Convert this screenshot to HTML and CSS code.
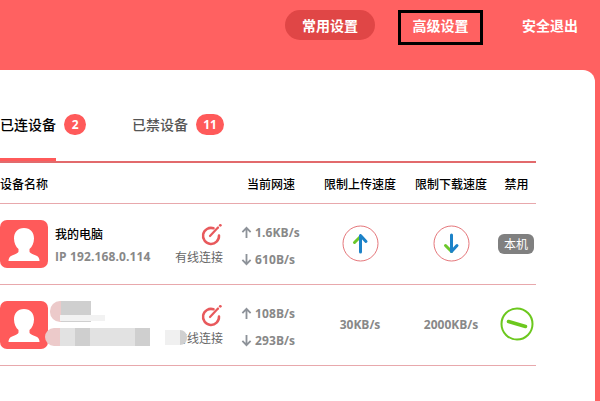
FILE: index.html
```html
<!DOCTYPE html>
<html lang="zh-CN">
<head>
    <meta charset="UTF-8">
    <meta name="viewport" content="width=device-width, initial-scale=1.0">
    <title>高级设置</title>
    <link rel="stylesheet" href="styles.css">
</head>
<body>
    <!-- Top navigation -->
    <div class="topbar">
        <a class="nav-item nav-active">常用设置</a>
        <a class="nav-item nav-focus">高级设置</a>
        <a class="nav-item nav-exit">安全退出</a>
    </div>

    <!-- Main white card -->
    <div class="card">
        <div class="tabs">
            <div class="tab tab-on">已连设备 <span class="badge">2</span></div>
            <div class="tab">已禁设备 <span class="badge">11</span></div>
        </div>

        <div class="row head">
            <div class="cell-name">设备名称</div>
            <div class="cell-speed">当前网速</div>
            <div class="cell-limit">限制上传速度</div>
            <div class="cell-limit">限制下载速度</div>
            <div class="cell-ban">禁用</div>
        </div>

        <!-- Device 1 -->
        <div class="row device">
            <div class="cell-name">
                <svg class="avatar" viewBox="0 0 48 48"><use href="#person"/></svg>
                <div class="info">
                    <div class="dev-name">我的电脑</div>
                    <div class="dev-ip">IP 192.168.0.114</div>
                </div>
                <div class="link">
                    <svg class="edit" viewBox="0 0 23 23"><use href="#pen"/></svg>
                    <div>有线连接</div>
                </div>
            </div>
            <div class="cell-speed rates">
                <div class="rate"><svg class="rate-arrow" viewBox="0 0 12 14"><path d="M6 13V2M1.500 6.500L6 2l4.500 4.500"/></svg>1.6KB/s</div>
                <div class="rate"><svg class="rate-arrow" viewBox="0 0 12 14"><path d="M6 1v11M1.500 7.500L6 12l4.500-4.500"/></svg>610B/s</div>
            </div>
            <div class="cell-limit">
                <svg class="limit-btn" viewBox="0 0 37 37">
                    <circle class="ring" cx="18.500" cy="18.500" r="17.500"/>
                    <path class="barb-green" d="M12.500 17.500l6-6"/>
                    <path class="barb-blue" d="M18.500 27V10.500M18.500 10.500l5.500 6"/>
                </svg>
            </div>
            <div class="cell-limit">
                <svg class="limit-btn" viewBox="0 0 37 37">
                    <circle class="ring" cx="18.500" cy="18.500" r="17.500"/>
                    <path class="barb-green" d="M12.500 20.500l6 6"/>
                    <path class="barb-blue" d="M18.500 10v16.500M18.500 26.500l5.500-6"/>
                </svg>
            </div>
            <div class="cell-ban"><span class="local">本机</span></div>
        </div>

        <!-- Device 2, name and address are blurred out -->
        <div class="row device">
            <div class="cell-name">
                <svg class="avatar" viewBox="0 0 48 48"><use href="#person"/></svg>
                <div class="link">
                    <svg class="edit" viewBox="0 0 23 23"><use href="#pen"/></svg>
                    <div>有线连接</div>
                </div>
                <div class="mosaic mosaic-name">
                    <i class="m-pink"></i><i class="m-grey"></i><i class="m-grey"></i>
                </div>
                <div class="mosaic mosaic-faint"></div>
                <div class="mosaic mosaic-ip">
                    <i class="m-pink"></i><i class="m-light"></i><i class="m-grey"></i><i class="m-light"></i><i class="m-light"></i><i class="m-light"></i><i class="m-grey"></i>
                </div>
                <div class="mosaic mosaic-tail">
                    <i class="m-pale"></i><i class="m-end"></i>
                </div>
            </div>
            <div class="cell-speed rates">
                <div class="rate"><svg class="rate-arrow" viewBox="0 0 12 14"><path d="M6 13V2M1.500 6.500L6 2l4.500 4.500"/></svg>108B/s</div>
                <div class="rate"><svg class="rate-arrow" viewBox="0 0 12 14"><path d="M6 1v11M1.500 7.500L6 12l4.500-4.500"/></svg>293B/s</div>
            </div>
            <div class="cell-limit limit-val">30KB/s</div>
            <div class="cell-limit limit-val">2000KB/s</div>
            <div class="cell-ban">
                <svg class="ban-btn" viewBox="0 0 34 34">
                    <circle cx="17" cy="17" r="15.500"/>
                    <path d="M8.500 14.500l17 5"/>
                </svg>
            </div>
        </div>
    </div>

    <!-- Shared icons -->
    <svg class="defs" aria-hidden="true">
        <symbol id="person" viewBox="0 0 48 48">
            <rect width="48" height="48" rx="7" fill="#ff5a5a"/>
            <path fill="#fff" d="M24 8c6.500 0 10 4.500 10 10.500 0 4.500-2 8.500-4.500 10.500v2.500c0 1.500 3 2.500 6.500 4 3 1.200 3.500 3.500 3.500 5.500H8.500c0-2 .5-4.300 3.500-5.500 3.500-1.500 6.500-2.500 6.500-4V29C16 27 14 23 14 18.500 14 12.500 17.500 8 24 8z"/>
        </symbol>
        <symbol id="pen" viewBox="0 0 23 23">
            <path fill="none" stroke="#e8595c" stroke-width="2.500" stroke-linecap="round" d="M14.500 5.300A8 8 0 1 0 20 12.500"/>
            <path fill="none" stroke="#e8595c" stroke-width="2.200" stroke-linecap="round" d="M11 13L19 4.500"/>
            <circle cx="21.300" cy="2.300" r="1.400" fill="#e8595c"/>
        </symbol>
    </svg>
</body>
</html>
```

FILE: styles.css
```css
/* General styling */

body {
    margin: 0;
    height: 401px;
    overflow: hidden;
    display: flex;
    flex-direction: column;
    background-color: #ff6161;
    font-family: "Noto Sans CJK SC", "Open Sans", sans-serif;
    font-size: 12px;
    color: #000;
}

.defs {
    display: none;
}

/* Top navigation */
.topbar {
    height: 70px;
    display: flex;
    align-items: flex-start;
    padding-top: 10px;
    padding-left: 285px;
    box-sizing: border-box;
}

.nav-item {
    font-size: 14px;
    font-weight: 700;
    color: #fff;
    line-height: 30px;
    text-align: center;
}

.nav-active {
    width: 90px;
    background-color: #e04646;
    border-radius: 15px;
}

.nav-focus {
    width: 79px;
    height: 29px;
    margin-left: 23px;
    border: 3px solid #000;
    line-height: 24px;
}

.nav-exit {
    margin-left: 39px;
}

/* White card */
.card {
    flex: 1;
    width: 595px;
    background-color: #fff;
    border-top-right-radius: 12px;
}

/* Tabs */
.tabs {
    width: 536px;
    height: 93px;
    box-sizing: border-box;
    display: flex;
    border-bottom: 2px solid #e26a6c;
}

.tab {
    width: 132px;
    height: 91px;
    box-sizing: border-box;
    padding-top: 42px;
    font-size: 14px;
    line-height: 24px;
    font-weight: 500;
    color: #555;
}

.tab-on {
    color: #000;
    position: relative;
}

.tab-on::after {
    content: "";
    position: absolute;
    left: 0;
    bottom: 0;
    width: 56px;
    height: 3px;
    background-color: #ff5a5a;
}

.badge {
    display: inline-block;
    min-width: 22px;
    height: 21px;
    box-sizing: border-box;
    margin-left: 5px;
    padding: 0 7px;
    border-radius: 11px;
    background-color: #ff5a5a;
    color: #fff;
    font-family: "Open Sans", sans-serif;
    font-size: 12px;
    font-weight: 700;
    line-height: 21px;
    text-align: center;
    vertical-align: 1px;
}

/* Table rows */
.row {
    width: 536px;
    display: grid;
    grid-template-columns: 240px 75px 90px 92px 39px;
    align-items: center;
    border-bottom: 1px solid #e8a8ac;
    box-sizing: border-box;
}

.head {
    height: 41px;
    font-weight: 500;
    white-space: nowrap;
}

.head .cell-speed {
    padding-left: 7px;
}

.head .cell-limit,
.head .cell-ban {
    text-align: center;
}

.device {
    height: 81px;
}

.cell-name {
    display: flex;
    align-items: center;
    position: relative;
}

.device .cell-name {
    height: 48px;
}

.avatar {
    width: 48px;
    height: 48px;
    flex: none;
}

.info {
    margin-left: 7px;
}

.dev-name {
    font-weight: 500;
    line-height: 20px;
    margin-bottom: 5px;
}

.dev-ip {
    font-family: "Open Sans", sans-serif;
    font-weight: 700;
    color: #888;
    line-height: 16px;
    letter-spacing: .12px;
    white-space: nowrap;
}

.link {
    margin-left: auto;
    margin-right: 17px;
    width: 48px;
    color: #666;
    line-height: 16px;
    text-align: center;
    white-space: nowrap;
}

.edit {
    display: block;
    width: 23px;
    height: 23px;
    margin: 0 0 3px 24px;
}

/* Current speed */
.rates {
    display: flex;
    flex-direction: column;
    gap: 11px;
    margin-top: 3px;
}

.rate {
    display: flex;
    align-items: center;
    height: 16px;
    padding-left: 1px;
    font-family: "Open Sans", sans-serif;
    font-weight: 700;
    color: #888;
    letter-spacing: .1px;
}

.rate-arrow {
    width: 11px;
    height: 13px;
    margin-right: 3px;
    fill: none;
    stroke: #8d9299;
    stroke-width: 2;
}

/* Limit columns */
.cell-limit {
    text-align: center;
}

.device .cell-limit {
    margin-bottom: 2px;
}

.limit-val {
    font-family: "Open Sans", sans-serif;
    font-weight: 700;
    color: #888;
}

.limit-btn {
    display: block;
    width: 37px;
    height: 37px;
    margin: 0 auto;
    fill: none;
}

.ring {
    stroke: #e5767a;
    stroke-width: 1;
}

.barb-green {
    stroke: #6cc82a;
    stroke-width: 3;
    stroke-linecap: round;
}

.barb-blue {
    stroke: #1c82c8;
    stroke-width: 3;
    stroke-linecap: round;
}

/* Disable column */
.cell-ban {
    text-align: center;
}

.local {
    display: block;
    width: 36px;
    height: 20px;
    margin-left: 1px;
    border-radius: 6px;
    background-color: #808080;
    color: #fff;
    line-height: 20px;
}

.ban-btn {
    display: block;
    width: 34px;
    height: 34px;
    margin: 0 auto 2px;
    fill: none;
    stroke: #6cc81e;
    stroke-width: 2;
}

.ban-btn path {
    stroke-width: 3.500;
    stroke-linecap: round;
}

/* Mosaic over the blurred device details */
.mosaic {
    position: absolute;
    display: flex;
}

.mosaic i {
    display: block;
    height: 100%;
    width: 15px;
}

.mosaic-name {
    left: 50px;
    top: 0;
    height: 21px;
}

.mosaic-name i:first-child {
    width: 11px;
    border-radius: 10px 0 0 10px;
}

.mosaic-faint {
    left: 60px;
    top: 14px;
    width: 45px;
    height: 6px;
    background-color: #f2f2f2;
}

.mosaic-ip {
    left: 45px;
    top: 27px;
    height: 18px;
}

.mosaic-ip i:first-child {
    border-radius: 9px 0 0 9px;
}

.mosaic-tail {
    left: 165px;
    top: 29px;
    height: 15px;
}

.mosaic-tail i:last-child {
    width: 7px;
    border-radius: 0 8px 8px 0;
}

.m-pink { background-color: #eccaca; }
.m-grey { background-color: #cfcfcf; }
.m-light { background-color: #e2e2e2; }
.m-pale { background-color: #f0f0f0; }
.m-end { background-color: #d0d0d0; }
```
